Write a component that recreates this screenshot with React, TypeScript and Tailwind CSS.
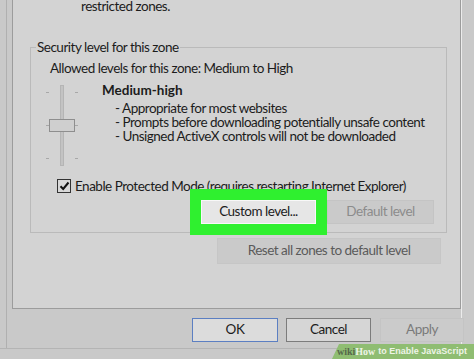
import React from "react";

function Btn({
  children,
  className = "",
}: {
  children: React.ReactNode;
  className?: string;
}) {
  return (
    <div
      className={
        "flex items-center justify-center text-[13.5px] leading-none shrink-0 " +
        className
      }
    >
      {children}
    </div>
  );
}

export default function App() {
  return (
    <div
      className="relative w-[474px] h-[359px] overflow-hidden bg-[#c9c9c9] text-[#1c1c1c] tracking-[-0.5px]"
      style={{ fontFamily: 'Lato, "Open Sans", sans-serif' }}
    >
      <div className="flex h-[349px] border-b border-[#b4b4b4]">
        <div className="w-[6px] shrink-0" />
        <div className="w-[6px] shrink-0 border-l border-[#b0b0b0]" />
        {/* tab panel */}
        <div className="w-[449px] shrink-0 h-[309px] border-l border-r border-b border-[#9c9c9c] bg-[#d3d3d3] flex flex-col">
          <div className="pl-[68px] -mt-[3px] text-[13.5px] leading-[18px]">
            restricted zones.
          </div>
          {/* group box */}
          <div className="relative ml-[17px] mt-[32px] w-[417px] h-[186px] border border-[#bababa] flex flex-col">
            <div className="absolute left-[5px] -top-[9px] px-[1px] bg-[#d3d3d3] text-[13.5px] leading-[16px]">
              Security level for this zone
            </div>
            <div className="pl-[19px] mt-[12px] text-[13.5px] leading-[16px]">
              Allowed levels for this zone: Medium to High
            </div>
            <div className="flex mt-[9px]">
              {/* slider */}
              <div className="relative shrink-0 ml-[15px] w-[32px] h-[82px]">
                <div className="absolute left-[14px] top-0 w-[4px] h-[81px] bg-[#c3c3c3] border border-[#b5b5b5]" />
                <div className="absolute left-0 top-[7px] w-[3px] h-[1px] bg-[#a8a8a8]" />
                <div className="absolute left-[29px] top-[7px] w-[3px] h-[1px] bg-[#a8a8a8]" />
                <div className="absolute left-0 top-[40px] w-[3px] h-[1px] bg-[#a8a8a8]" />
                <div className="absolute left-[29px] top-[40px] w-[3px] h-[1px] bg-[#a8a8a8]" />
                <div className="absolute left-0 top-[73px] w-[3px] h-[1px] bg-[#a8a8a8]" />
                <div className="absolute left-[29px] top-[73px] w-[3px] h-[1px] bg-[#a8a8a8]" />
                <div className="absolute left-[3px] top-[34px] w-[26px] h-[13px] bg-[#cfcfcf] border border-[#8e8e8e]" />
              </div>
              <div className="ml-[24px] -mt-[3px] whitespace-nowrap">
                <div className="font-bold text-[13.5px] tracking-[0px] leading-[16px]">
                  Medium-high
                </div>
                <div className="pl-[13px] mt-[3px] text-[13.5px] leading-[14px]">
                  <div>- Appropriate for most websites</div>
                  <div>- Prompts before downloading potentially unsafe content</div>
                  <div>- Unsigned ActiveX controls will not be downloaded</div>
                </div>
              </div>
            </div>
            <div className="flex items-center ml-[26px] mt-[11px]">
              <div className="shrink-0 w-[14px] h-[14px] border border-[#333] bg-[#d8d8d8] flex items-center justify-center">
                <svg width="11" height="10" viewBox="0 0 11 10">
                  <path
                    d="M1.5 5.2 L4.2 8 L9.5 1.5"
                    fill="none"
                    stroke="#111"
                    strokeWidth="2"
                  />
                </svg>
              </div>
              <div className="ml-[4px] text-[13.5px] leading-[16px] whitespace-nowrap">
                Enable Protected Mode (requires restarting Internet Explorer)
              </div>
            </div>
            <div className="flex mt-[6px] ml-[170px]">
              <Btn className="w-[115px] h-[24px] bg-[#e6e6e6] border border-[#f8f8f8] outline-[11px] outline-solid outline-[#2ff02f]">
                Custom level...
              </Btn>
              <div className="w-[11px] shrink-0" />
              <Btn className="w-[107px] h-[24px] bg-[#cacaca] border border-[#c4c4c4] text-[#8c8c8c]">
                Default level
              </Btn>
            </div>
          </div>
          <div className="flex mt-[5px] ml-[204px]">
            <Btn className="w-[224px] h-[26px] bg-[#cacaca] border border-[#c6c6c6] text-[#5a5a5a]">
              Reset all zones to default level
            </Btn>
          </div>
        </div>
        <div className="w-[1px] shrink-0 bg-[#ececec]" />
      </div>
      {/* bottom buttons overlaying the lower area */}
      <div className="absolute left-0 top-[318px] flex pl-[192px]">
        <Btn className="w-[86px] h-[24px] bg-[#dcdcdc] border border-[#5c7fc2]">OK</Btn>
        <div className="w-[8px] shrink-0" />
        <Btn className="w-[85px] h-[24px] bg-[#d6d6d6] border border-[#7c7c7c]">Cancel</Btn>
        <div className="w-[9px] shrink-0" />
        <Btn className="w-[84px] h-[24px] bg-[#cbcbcb] border border-[#c4c4c4] text-[#7a7a7a]">Apply</Btn>
      </div>
      {/* watermark */}
      <div className="absolute right-0 bottom-0 w-[142px] h-[15px] tracking-normal">
        <svg className="absolute inset-0" width="142" height="15" viewBox="0 0 142 15">
          <polygon points="7,0 142,0 142,15 0,15" fill="#8fbd72" />
        </svg>
        <div className="absolute left-[5px] top-0 h-[15px] flex items-center whitespace-nowrap">
          <span
            className="text-[10px] font-bold text-[#55684a] leading-none"
            style={{ fontFamily: '"Liberation Serif", serif' }}
          >
            wiki
          </span>
          <span
            className="text-[10px] font-bold text-[#eef4e8] leading-none"
            style={{ fontFamily: '"Liberation Serif", serif' }}
          >
            How
          </span>
          <span
            className="ml-[3px] text-[9px] font-bold text-[#eef4e8] leading-none"
            style={{ fontFamily: '"Liberation Sans", sans-serif' }}
          >
            to Enable JavaScript
          </span>
        </div>
      </div>
    </div>
  );
}
